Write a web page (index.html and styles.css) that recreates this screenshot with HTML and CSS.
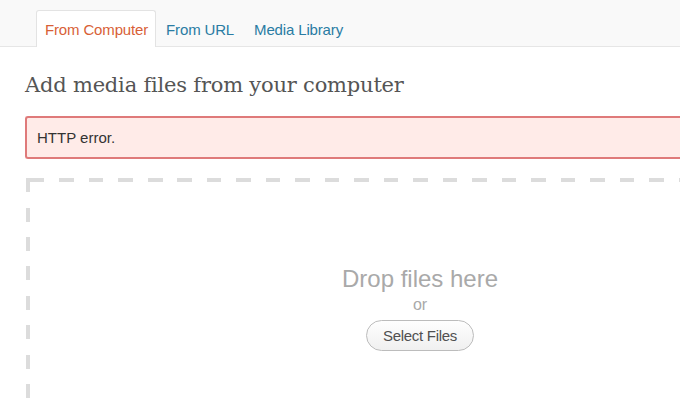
FILE: index.html
```html
<!DOCTYPE html>
<html>
<head>
<meta charset="utf-8">
<link rel="stylesheet" href="styles.css">
</head>
<body>
<div class="tabs-bar">
  <ul class="tabs">
    <li class="tab active">From Computer</li>
    <li class="tab">From URL</li>
    <li class="tab">Media Library</li>
  </ul>
</div>
<div class="content">
  <h3 class="title">Add media files from your computer</h3>
  <div class="error">HTTP error.</div>
  <div class="drop-area">
    <div class="drop-inside">
      <p class="drop-info">Drop files here</p>
      <p class="drop-or">or</p>
      <button class="select-btn">Select Files</button>
    </div>
  </div>
</div>
</body>
</html>
```

FILE: styles.css
```css
html, body {
  margin: 0;
  padding: 0;
  background: #fff;
  overflow: hidden;
  width: 680px;
  height: 406px;
  font-family: "Liberation Sans", Arial, sans-serif;
}

.tabs-bar {
  height: 47px;
  background: #f9f9f9;
  border-bottom: 1px solid #e6e6e6;
  box-sizing: border-box;
  padding-left: 36px;
  display: flex;
  align-items: flex-end;
}

.tabs {
  list-style: none;
  margin: 0 0 -1px 0;
  padding: 0;
  display: flex;
}

.tab {
  font-size: 15px;
  color: #2a7ca3;
  height: 35px;
  line-height: 37px;
  padding: 0 9px;
  border: 1px solid transparent;
  border-bottom: none;
  border-radius: 3px 3px 0 0;
  letter-spacing: -0.15px;
}

.tab.active {
  color: #d85f37;
  background: #fff;
  border-color: #e3e3e3;
  height: 36px;
  padding: 0 7px 0 8px;
}

.content {
  padding-left: 25px;
}

.title {
  margin: 0;
  padding-top: 25px;
  font-family: "DejaVu Serif", Georgia, serif;
  font-weight: normal;
  font-size: 21px;
  line-height: 26px;
  color: #555;
  letter-spacing: -0.2px;
}

.error {
  margin-top: 18px;
  height: 43px;
  box-sizing: border-box;
  border: 2px solid #df7a7a;
  border-right: none;
  border-radius: 3px 0 0 3px;
  background: #ffebe8;
  color: #333;
  font-size: 15px;
  line-height: 39px;
  padding-left: 10px;
}

.drop-area {
  margin-top: 19px;
  margin-left: 1px;
  height: 228px;
  box-sizing: border-box;
  padding-left: 134px;
  background:
    repeating-linear-gradient(90deg, #dcdcdc 0 14.5px, transparent 14.5px 29.5px) 4px 0 / 100% 4px no-repeat,
    repeating-linear-gradient(180deg, #dcdcdc 0 14px, transparent 14px 29.5px) 0 0 / 4px 100% no-repeat;
}

.drop-inside {
  padding-top: 87px;
  display: flex;
  flex-direction: column;
  align-items: center;
}

.drop-info {
  margin: 0;
  font-size: 24px;
  line-height: 28px;
  color: #a9a9a9;
}

.drop-or {
  margin: 2px 0 0;
  font-size: 16px;
  line-height: 20px;
  color: #a9a9a9;
}

.select-btn {
  margin-top: 5px;
  height: 31px;
  padding: 0 16px;
  border: 1px solid #bcbcbc;
  border-radius: 16px;
  background: linear-gradient(#fefefe, #f0f0f0);
  font-family: "Liberation Sans", Arial, sans-serif;
  font-size: 15px;
  color: #505050;
  letter-spacing: -0.3px;
}
```
